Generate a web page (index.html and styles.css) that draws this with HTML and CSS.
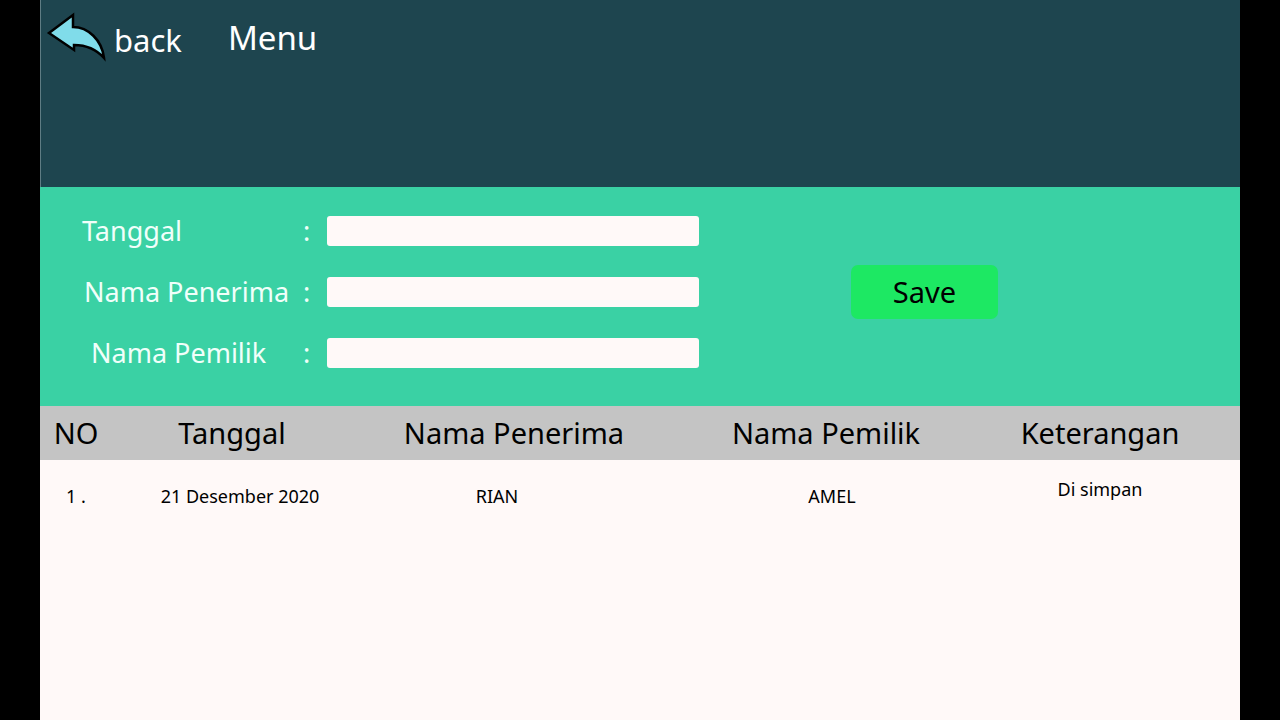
FILE: index.html
```html
<!DOCTYPE html>
<html lang="id">
<head>
<meta charset="utf-8">
<meta name="viewport" content="width=device-width, initial-scale=1">
<title>Menu</title>
<link rel="stylesheet" href="styles.css">
</head>
<body>
<div class="page">
  <header class="topbar">
    <a class="back" href="#">
      <svg class="back-icon" viewBox="0 0 60 50" aria-hidden="true">
        <path d="M3 21 27 3 27 15C42 15 56 28 58 46 50 37 39 33 28 33L28 38Z"/>
      </svg>
      <span class="back-text">back</span>
    </a>
    <h1 class="title">Menu</h1>
  </header>

  <form class="entry">
    <div class="fields">
      <label class="label" for="tanggal">Tanggal</label>
      <span class="colon">:</span>
      <input class="input" id="tanggal" type="text">
      <label class="label label-penerima" for="penerima">Nama Penerima</label>
      <span class="colon">:</span>
      <input class="input" id="penerima" type="text">
      <label class="label label-pemilik" for="pemilik">Nama Pemilik</label>
      <span class="colon">:</span>
      <input class="input" id="pemilik" type="text">
    </div>
    <button class="save" type="button">Save</button>
  </form>

  <table class="records">
    <colgroup>
      <col class="col-no"><col class="col-date"><col class="col-receiver"><col class="col-owner"><col class="col-note">
    </colgroup>
    <thead>
      <tr><th>NO</th><th>Tanggal</th><th>Nama Penerima</th><th>Nama Pemilik</th><th class="note">Keterangan</th></tr>
    </thead>
    <tbody>
      <tr><td class="number">1 .</td><td class="date">21 Desember 2020</td><td class="receiver">RIAN</td><td class="owner">AMEL</td><td class="note status">Di simpan</td></tr>
    </tbody>
  </table>
</div>
</body>
</html>
```
FILE: styles.css
```css
* {
  box-sizing: border-box;
}

body {
  margin: 0;
  padding: 0 40px;
  background: #000;
  font-family: "Noto Sans", "Open Sans", sans-serif;
  color: #000;
}

.page {
  min-height: 100vh;
  background: #fff9f8;
}

.topbar {
  display: flex;
  align-items: flex-start;
  gap: 46px;
  min-height: 187px;
  padding: 12px 5px;
  border-left: 1px solid #5f7c83;
  background: #1e454f;
  color: #fff;
}

.back {
  display: flex;
  gap: 8px;
  color: inherit;
  text-decoration: none;
  font-size: 31px;
  line-height: 56px;
}

.back-icon {
  width: 60px;
  height: 50px;
  fill: #80dcea;
  stroke: #000;
  stroke-width: 2.5;
}

.title {
  margin: 0;
  font-size: 33px;
  font-weight: 400;
  line-height: 52px;
}

.entry {
  display: flex;
  align-items: center;
  gap: 152px;
  min-height: 219px;
  padding: 0 40px 10px;
  background: #3ad1a4;
}

.fields {
  display: grid;
  grid-template-columns: 223px 24px minmax(120px, 372px);
  grid-auto-rows: 30px;
  row-gap: 31px;
  align-items: center;
}

.label,
.colon {
  color: #f0fffa;
  font-size: 27px;
  line-height: 30px;
  white-space: nowrap;
}

.label {
  padding-left: 2px;
}

.label-penerima {
  padding-left: 4px;
}

.label-pemilik {
  padding-left: 11px;
}

.input {
  width: 100%;
  height: 30px;
  padding: 0 8px;
  border: 0;
  border-radius: 3px;
  background: #fff9f8;
  font: inherit;
  font-size: 20px;
}

.save {
  width: 147px;
  height: 54px;
  padding: 0;
  border: 0;
  border-radius: 7px;
  background: #1de863;
  color: #000;
  font: inherit;
  font-size: 29px;
}

.records {
  width: 100%;
  table-layout: fixed;
  border-collapse: collapse;
  text-align: center;
}

.col-no {
  width: 6%;
}

.col-date {
  width: 20%;
}

.col-receiver {
  width: 27%;
}

.col-owner {
  width: 25%;
}

.col-note {
  width: 22%;
}

.records th {
  height: 54px;
  padding: 0;
  background: #c4c4c4;
  font-size: 29px;
  font-weight: 400;
  line-height: 54px;
  white-space: nowrap;
}

.records td {
  padding: 22px 0;
  font-size: 18px;
  line-height: 28px;
  vertical-align: top;
}

.records .note {
  padding-right: 16px;
}

.records .date {
  padding-left: 16px;
}

.records .receiver {
  padding-right: 34px;
}

.records .owner {
  padding-left: 12px;
}

.records .status {
  padding-top: 15px;
}
```
